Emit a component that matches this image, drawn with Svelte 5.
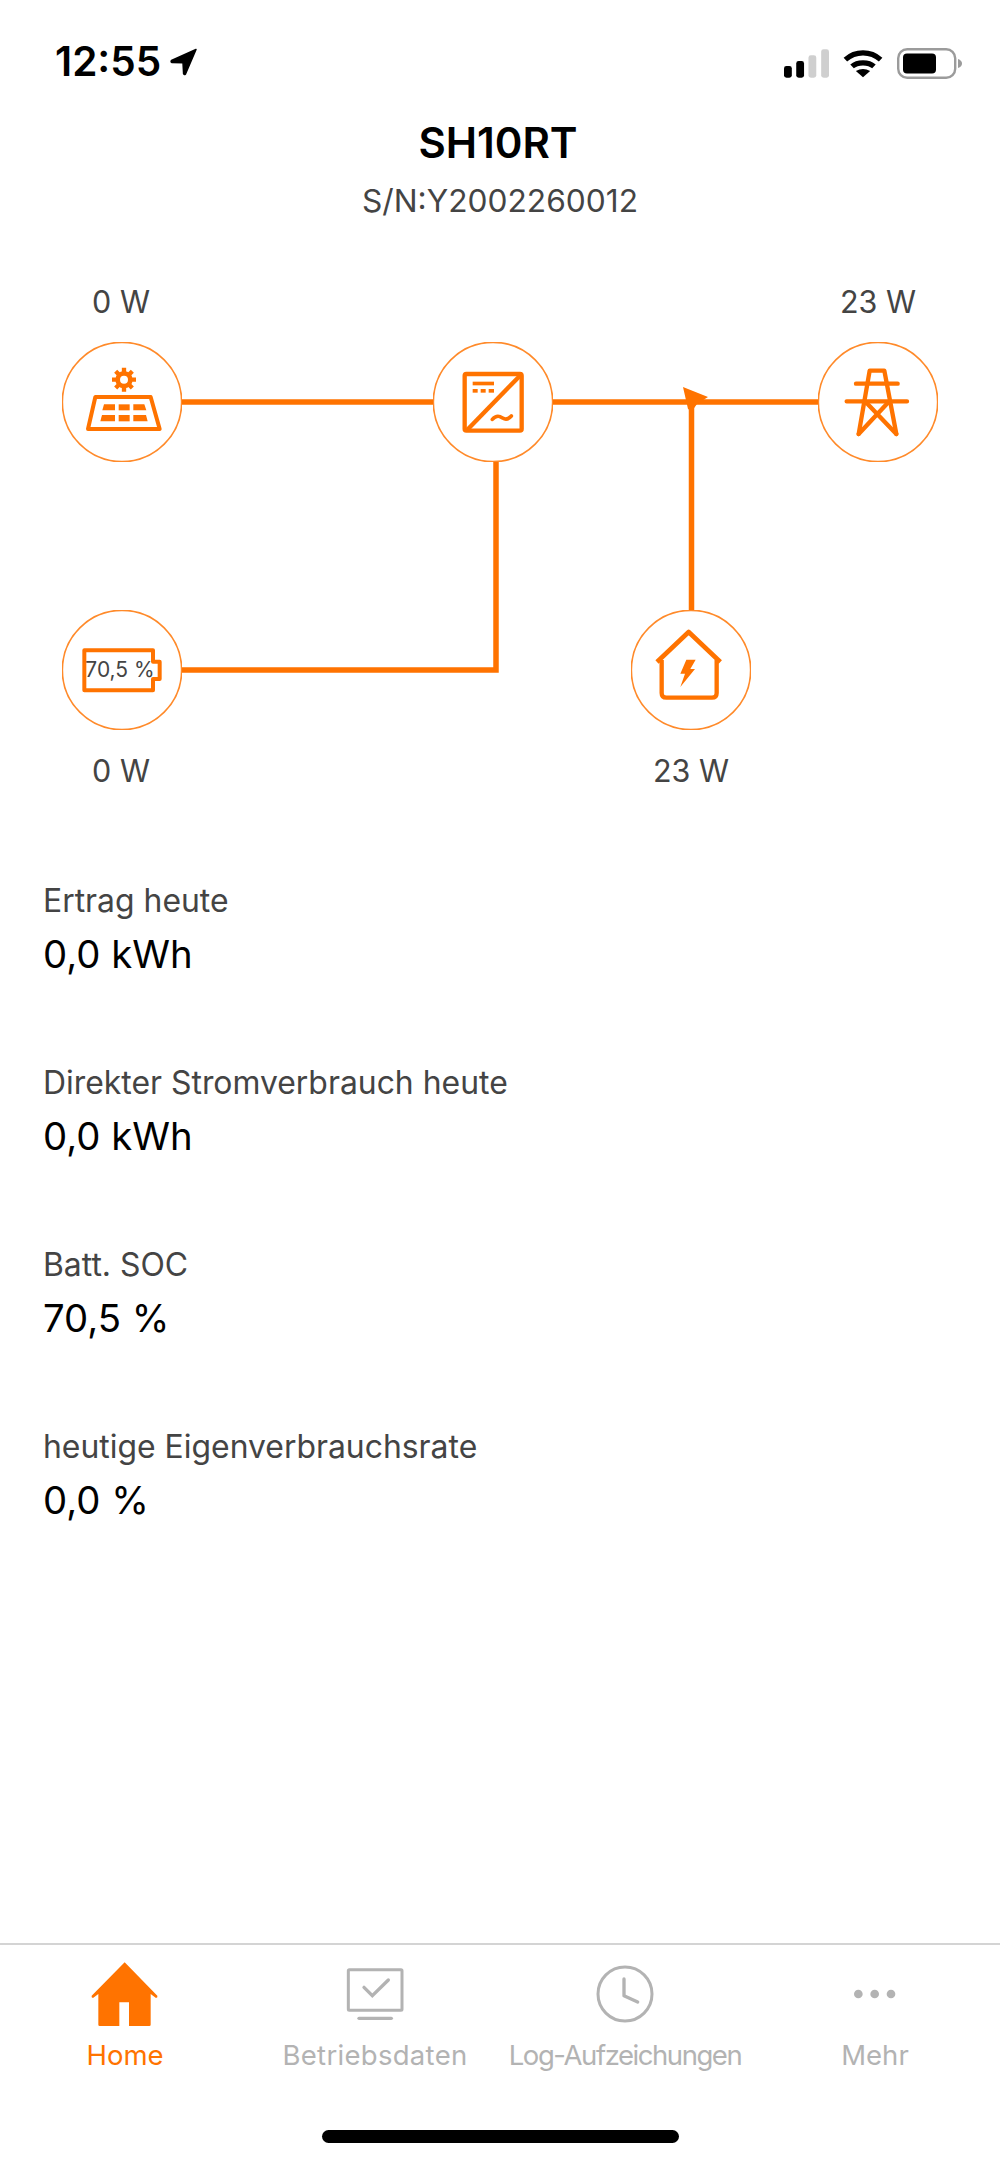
<script>
  const metrics = [
    { label: 'Ertrag heute', value: '0,0 kWh' },
    { label: 'Direkter Stromverbrauch heute', value: '0,0 kWh' },
    { label: 'Batt. SOC', value: '70,5 %' },
    { label: 'heutige Eigenverbrauchsrate', value: '0,0 %' }
  ];
</script>

<div class="screen">
  <header class="status">
    <div class="clock">
      <span>12:55</span>
      <svg class="loc" width="28" height="28" viewBox="0 0 28 28"><path d="M26 1.5 1.5 12.5q-1 1.500.5 2L13 14.800l.6 11q.6 1.400 1.800.3Z" fill="#000" stroke="#000" stroke-width="1.500" stroke-linejoin="round"/></svg>
    </div>
    <div class="indicators">
      <svg width="45" height="29" viewBox="0 0 46 29">
        <rect x="0" y="17" width="8" height="12" rx="2.500" fill="#000"/>
        <rect x="12.500" y="12" width="8" height="17" rx="2.500" fill="#000"/>
        <rect x="25" y="6" width="8" height="23" rx="2.500" fill="#cfcfcf"/>
        <rect x="38" y="0" width="8" height="29" rx="2.500" fill="#cfcfcf"/>
      </svg>
      <svg class="wifi" width="40" height="30" viewBox="0 0 42 30" fill="none" stroke="#000" stroke-width="5.500">
        <path d="M2.500 11.500C13 2 29 2 39.500 11.500"/>
        <path d="M9.500 18.500C15 13.500 27 13.500 32.500 18.500"/>
        <path d="M21 30 13.500 23.500Q21 19 28.500 23.500Z" fill="#000" stroke="none"/>
      </svg>
      <svg class="batt" width="65" height="31" viewBox="0 0 65 31">
        <rect x="1.200" y="1.200" width="57" height="28.600" rx="9" fill="none" stroke="#9b9b9b" stroke-width="2.400"/>
        <rect x="6" y="5.500" width="33" height="20" rx="4" fill="#000"/>
        <path d="M61 11q4 1.500 4 4.500t-4 4.500Z" fill="#9b9b9b"/>
      </svg>
    </div>
  </header>

  <div class="title">
    <h1>SH10RT</h1>
    <p>S/N:Y2002260012</p>
  </div>

  <section class="diagram">
    <svg class="wires" width="1000" height="560" viewBox="0 0 1000 560" fill="none" stroke="#ff7300" stroke-width="5.500">
      <path d="M182 128H433"/>
      <path d="M553 128H818"/>
      <path d="M496 188V396H182"/>
      <path d="M691.500 368V128"/>
      <path d="M683 113 708 123 697 130 692 137 688 135Z" fill="#ff7300" stroke="none"/>
    </svg>

    <span class="power p1">0 W</span>
    <span class="power p2">23 W</span>
    <span class="power p3">0 W</span>
    <span class="power p4">23 W</span>

    <svg class="node solar" viewBox="65 62 360 360">
      <circle cx="245" cy="242" r="179" class="ring"/>
      <g fill="#ff7300">
        <circle cx="251" cy="175" r="19" fill="none" stroke="#ff7300" stroke-width="14"/>
        <g stroke="#ff7300" stroke-width="13">
          <path d="M251 139V211M215 175H287M226 150 276 200M276 150 226 200"/>
        </g>
        <circle cx="251" cy="175" r="12" fill="#fff"/>
      </g>
      <path d="M165 227H331L358 323H143Z" fill="none" stroke="#ff7300" stroke-width="12" stroke-linejoin="round"/>
      <g fill="#ff7300">
        <path d="M191 249H224V267H186Z"/>
        <path d="M235 249H268V267H235Z"/>
        <path d="M279 249H312L318 267H279Z"/>
        <path d="M185 281H224V300H180Z"/>
        <path d="M235 281H268V300H235Z"/>
        <path d="M279 281H317L322 300H279Z"/>
      </g>
    </svg>

    <svg class="node inverter" viewBox="100 62 360 360">
      <circle cx="280" cy="242" r="179" class="ring"/>
      <rect x="195" y="158" width="171" height="170" rx="5" fill="none" stroke="#ff7300" stroke-width="13"/>
      <path d="M203 325 361 163" stroke="#ff7300" stroke-width="13" fill="none"/>
      <g fill="#ff7300">
        <rect x="219" y="181" width="64" height="11"/>
        <rect x="219" y="203" width="15" height="11"/>
        <rect x="243" y="203" width="15" height="11"/>
        <rect x="267" y="203" width="16" height="11"/>
      </g>
      <path d="M278 294C292 278 303 286 309 290 318 296 328 292 335 284" fill="none" stroke="#ff7300" stroke-width="11" stroke-linecap="round"/>
    </svg>

    <svg class="node grid" viewBox="536 62 360 360">
      <circle cx="716" cy="242" r="179" class="ring"/>
      <g fill="none" stroke="#ff7300" stroke-width="13" stroke-linecap="round" stroke-linejoin="round">
        <path d="M658 338 691 148H735L771 338"/>
        <path d="M650 187H775M622 240H803"/>
        <path d="M682 245 771 338M745 245 658 338"/>
      </g>
    </svg>

    <div class="node batterynode">
      <svg viewBox="67 57 360 360">
        <circle cx="247" cy="237" r="179" class="ring"/>
        <path d="M134 178H340V212H360V264H340V298H134Z" fill="none" stroke="#ff7300" stroke-width="12" stroke-linejoin="round"/>
      </svg>
      <span class="soc">70,5 %</span>
    </div>

    <svg class="node housenode" viewBox="92 57 360 360">
      <circle cx="272" cy="237" r="179" class="ring"/>
      <path d="M184 207V306Q184 320 198 320H335Q349 320 349 306V207" fill="none" stroke="#ff7300" stroke-width="13"/>
      <path d="M170 213 265 123 360 213" fill="none" stroke="#ff7300" stroke-width="14" stroke-linejoin="round"/>
      <path d="M258 206H286L270 234H284L240 288 254 248H240Z" fill="#ff7300"/>
    </svg>
  </section>

  <section class="metrics">
    {#each metrics as m}
      <div class="metric">
        <div class="label">{m.label}</div>
        <div class="value">{m.value}</div>
      </div>
    {/each}
  </section>

  <nav class="tabs">
    <div class="tab active">
      <svg viewBox="255 75 240 240">
        <path d="M374 97 472 197Q474 203 468 204L452 192V284Q452 288 448 288H387V217H358V288H299Q295 288 295 284V192L279 204Q273 203 275 197Z" fill="#ff7300"/>
      </svg>
      <span>Home</span>
    </div>
    <div class="tab wide">
      <svg viewBox="1005 75 240 240" fill="none" stroke="#b3b3b3" stroke-width="9">
        <rect x="1045" y="119" width="161" height="122" rx="3"/>
        <path d="M1077 265H1174" stroke-linecap="round" stroke-width="10"/>
        <path d="M1092 172 1117 197 1165 150" stroke-linecap="round" stroke-width="10"/>
      </svg>
      <span>Betriebsdaten</span>
    </div>
    <div class="tab tight">
      <svg viewBox="255 75 240 240" fill="none" stroke="#b3b3b3" stroke-width="9">
        <circle cx="375" cy="192" r="81"/>
        <path d="M372 147V197L413 216" stroke-linecap="round" stroke-linejoin="round" stroke-width="10"/>
      </svg>
      <span>Log-Aufzeichungen</span>
    </div>
    <div class="tab">
      <svg viewBox="1005 75 240 240" fill="#b3b3b3">
        <circle cx="1075" cy="192" r="13"/>
        <circle cx="1124" cy="192" r="13"/>
        <circle cx="1173" cy="192" r="13"/>
      </svg>
      <span>Mehr</span>
    </div>
  </nav>

  <div class="home-bar"><i></i></div>
</div>

<style>
  :global(body) { margin: 0; background: #fff; }
  .screen {
    width: 1000px;
    height: 2165px;
    display: flex;
    flex-direction: column;
    font-family: Inter, "Liberation Sans", sans-serif;
    background: #fff;
    overflow: hidden;
  }
  .status {
    height: 46px;
    padding: 39px 38px 0 55px;
    display: flex;
    justify-content: space-between;
    align-items: center;
    flex: none;
  }
  .clock {
    display: flex;
    align-items: center;
    gap: 9px;
    font-size: 40.500px;
    font-weight: 600;
    color: #000;
    line-height: 46px;
  }
  .indicators { display: flex; align-items: center; gap: 14px; margin-top: 2px; }
  .indicators svg { display: block; }
  .title { text-align: center; margin-top: 30px; flex: none; }
  h1 {
    margin: 0;
    font-size: 42px;
    font-weight: 600;
    line-height: 56px;
    color: #000;
    transform: translateX(-2px);
  }
  .title p {
    margin: 4px 0 0;
    font-size: 31.700px;
    line-height: 52px;
    color: #444;
  }
  .diagram { position: relative; height: 560px; flex: none; margin-top: 47px; }
  .wires { position: absolute; left: 0; top: 0; }
  .ring { fill: #fff; stroke: #ff8a2a; stroke-width: 5; }
  .node { position: absolute; width: 120px; height: 120px; display: block; }
  .node svg { width: 120px; height: 120px; display: block; }
  .solar { left: 62px; top: 68px; }
  .inverter { left: 433px; top: 68px; }
  .grid { left: 818px; top: 68px; }
  .batterynode { left: 62px; top: 336px; }
  .housenode { left: 631px; top: 336px; }
  .soc {
    position: absolute;
    left: 0;
    width: 116px;
    top: 48px;
    text-align: center;
    font-size: 21px;
    line-height: 24px;
    color: #444;
  }
  .power {
    position: absolute;
    width: 160px;
    text-align: center;
    font-size: 30.500px;
    line-height: 40px;
    color: #444;
  }
  .p1 { left: 41px; top: 8px; }
  .p2 { left: 798px; top: 8px; }
  .p3 { left: 41px; top: 477px; }
  .p4 { left: 611px; top: 477px; }
  .metrics { padding: 0 43px; margin-top: 47px; flex: 1; }
  .metric { height: 182px; }
  .label { font-size: 31.900px; line-height: 40px; color: #444; }
  .value { font-size: 38.300px; line-height: 50px; color: #000; margin-top: 8px; }
  .tabs {
    display: flex;
    flex: none;
    height: 149px;
    border-top: 2px solid #d4d4d4;
    box-sizing: border-box;
    padding-top: 10px;
  }
  .tab {
    width: 250px;
    display: flex;
    flex-direction: column;
    align-items: center;
    font-size: 27.500px;
    line-height: 36px;
    color: #b3b3b3;
  }
  .tab.wide { letter-spacing: 0.3px; }
  .tab.tight { letter-spacing: -1.450px; }
  .tab svg { width: 80px; height: 80px; display: block; margin-bottom: 2px; }
  .tab.active { color: #ff7300; }
  .home-bar { height: 73px; flex: none; display: flex; justify-content: center; padding-top: 38px; box-sizing: border-box; }
  .home-bar i { display: block; width: 357px; height: 13px; border-radius: 7px; background: #000; margin-left: 1px; }
</style>
